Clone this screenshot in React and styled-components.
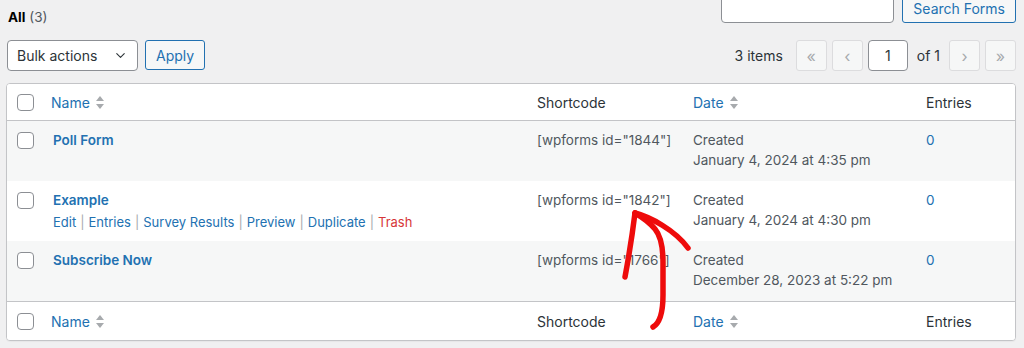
import React from 'react';
import styled, { createGlobalStyle } from 'styled-components';
import { ChevronDown } from 'lucide-react';

const GlobalStyle = createGlobalStyle`
	* {
		box-sizing: border-box;
	}
	body {
		margin: 0;
		background: #f0f0f1;
		font-family: Inter, 'Liberation Sans', Arial, sans-serif;
		font-size: 13.5px;
		color: #50575e;
		overflow: hidden;
	}
`;

const forms = [
	{ id: 1844, name: 'Poll Form', date: 'January 4, 2024 at 4:35 pm', striped: true },
	{ id: 1842, name: 'Example', date: 'January 4, 2024 at 4:30 pm', actions: true },
	{ id: 1766, name: 'Subscribe Now', date: 'December 28, 2023 at 5:22 pm', striped: true },
];

const actions = ['Edit', 'Entries', 'Survey Results', 'Preview', 'Duplicate'];

const SortIcon = () => (
	<SortSvg width='8' height='13' viewBox='0 0 8 13'>
		<path d='M4 0 L8 5 L0 5 Z' />
		<path d='M0 8 L8 8 L4 13 Z' />
	</SortSvg>
);

const ColumnHeads = ({ footer }) => (
	<HeadRow footer={footer}>
		<CheckCell>
			<Checkbox />
		</CheckCell>
		<HeadCell>
			<SortLink>
				Name <SortIcon />
			</SortLink>
		</HeadCell>
		<HeadCell>Shortcode</HeadCell>
		<HeadCell>
			<SortLink>
				Date <SortIcon />
			</SortLink>
		</HeadCell>
		<HeadCell>Entries</HeadCell>
	</HeadRow>
);

const App = () => {
	return (
		<Page>
			<GlobalStyle />
			<TopBar>
				<Subsubsub>
					<strong>All</strong> (3)
				</Subsubsub>
				<SearchBox>
					<SearchInput type='text' />
					<Button>Search Forms</Button>
				</SearchBox>
			</TopBar>

			<Tablenav>
				<BulkGroup>
					<BulkSelect>
						Bulk actions
						<ChevronDown size={15} strokeWidth={1.75} />
					</BulkSelect>
					<Button>Apply</Button>
				</BulkGroup>
				<Pagination>
					<ItemsCount>3 items</ItemsCount>
					<PageButton>«</PageButton>
					<PageButton>‹</PageButton>
					<PageInput>1</PageInput>
					<PageOf>of 1</PageOf>
					<PageButton>›</PageButton>
					<PageButton>»</PageButton>
				</Pagination>
			</Tablenav>

			<Table>
				<ColumnHeads />
				{forms.map((form) => (
					<Row key={form.id} striped={form.striped}>
						<CheckCell>
							<Checkbox />
						</CheckCell>
						<Cell>
							<RowTitle>{form.name}</RowTitle>
							{form.actions && (
								<RowActions>
									{actions.map((a) => (
										<React.Fragment key={a}>
											<ActionLink>{a}</ActionLink>
											<Sep>|</Sep>
										</React.Fragment>
									))}
									<ActionLink danger>Trash</ActionLink>
								</RowActions>
							)}
						</Cell>
						<Cell>[wpforms id="{form.id}"]</Cell>
						<Cell>
							Created
							<br />
							{form.date}
						</Cell>
						<Cell>
							<EntryLink>0</EntryLink>
						</Cell>
					</Row>
				))}
				<ColumnHeads footer />
			</Table>

			<Arrow width='110' height='140' viewBox='0 0 110 140'>
				<path d='M53 132 C60 128 63 118 63 100 L63 67 C63 50 60 40 55 34 C50 28 42 22 35 18' />
				<path d='M35 18 Q31 50 25 82' />
				<path d='M35 18 C50 22 75 35 88 53' />
			</Arrow>
		</Page>
	);
};

export default App;

const Page = styled.div`
	position: relative;
	display: flow-root;
	height: 348px;
	padding: 0 8px 0 6px;
`;

const TopBar = styled.div`
	display: flex;
	justify-content: space-between;
	align-items: flex-start;
	height: 30px;
	margin-top: -7px;
`;

const Subsubsub = styled.div`
	padding: 14px 0 0 2px;
	line-height: 20px;
	color: #50575e;
	strong {
		color: #000;
		font-weight: 700;
	}
`;

const SearchBox = styled.div`
	display: flex;
	gap: 8px;
`;

const SearchInput = styled.input`
	width: 173px;
	height: 30px;
	margin: 0;
	border: 1px solid #8c8f94;
	border-radius: 4px;
	background: #fff;
`;

const Button = styled.button`
	height: 30px;
	padding: 0 10px;
	border: 1px solid #2271b1;
	border-radius: 3px;
	background: #f6f7f7;
	color: #2271b1;
	font-family: inherit;
	font-size: 14px;
`;

const Tablenav = styled.div`
	display: flex;
	justify-content: space-between;
	align-items: center;
	height: 31px;
	margin-top: 17px;
`;

const BulkGroup = styled.div`
	display: flex;
	gap: 7px;
	padding-left: 1px;
`;

const BulkSelect = styled.div`
	display: flex;
	align-items: center;
	justify-content: space-between;
	width: 131px;
	height: 31px;
	padding: 0 9px 0 9px;
	border: 1px solid #8c8f94;
	border-radius: 4px;
	background: #fff;
	color: #2c3338;
	font-size: 14px;
	svg {
		color: #2c3338;
	}
`;

const Pagination = styled.div`
	display: flex;
	align-items: center;
	gap: 5px;
`;

const ItemsCount = styled.span`
	margin-right: 8px;
	font-size: 14px;
	color: #2c3338;
`;

const PageButton = styled.span`
	display: flex;
	align-items: center;
	justify-content: center;
	width: 31px;
	height: 31px;
	border: 1px solid #dcdcde;
	border-radius: 3px;
	background: #f6f7f7;
	color: #a7aaad;
	font-size: 16px;
`;

const PageInput = styled.span`
	display: flex;
	align-items: center;
	justify-content: center;
	width: 40px;
	height: 31px;
	border: 1px solid #8c8f94;
	border-radius: 4px;
	background: #fff;
	color: #2c3338;
	font-size: 14px;
`;

const PageOf = styled.span`
	margin: 0 4px;
	font-size: 14px;
	color: #2c3338;
`;

const Table = styled.div`
	margin-top: 12px;
	background: #fff;
	border: 1px solid #c3c4c7;
	border-radius: 4px;
	overflow: hidden;
	box-shadow: 0 1px 1px rgba(0, 0, 0, 0.04);
`;

const HeadRow = styled.div`
	display: grid;
	grid-template-columns: 36px 484px 156px 233px 1fr;
	align-items: center;
	height: ${(p) => (p.footer ? '39px' : '37px')};
	border-top: ${(p) => (p.footer ? '1px solid #c3c4c7' : 'none')};
	border-bottom: ${(p) => (p.footer ? 'none' : '1px solid #c3c4c7')};
	background: #fff;
`;

const Row = styled.div`
	display: grid;
	grid-template-columns: 36px 484px 156px 233px 1fr;
	align-items: start;
	height: 60px;
	background: ${(p) => (p.striped ? '#f6f7f7' : '#fff')};
	line-height: 20px;
`;

const CheckCell = styled.div`
	display: flex;
	padding-left: 10px;
	${Row} & {
		padding-top: 11px;
	}
`;

const Checkbox = styled.span`
	width: 17px;
	height: 17px;
	border: 1px solid #8c8f94;
	border-radius: 4px;
	background: #fff;
`;

const HeadCell = styled.div`
	padding: 0 10px;
	font-size: 14px;
	color: #2c3338;
	&:nth-child(2) {
		padding-left: 8px;
	}
`;

const SortLink = styled.span`
	display: inline-flex;
	align-items: center;
	gap: 6px;
	color: #2271b1;
`;

const SortSvg = styled.svg`
	fill: #a7aaad;
`;

const Cell = styled.div`
	padding: 9px 10px 0;
	font-size: 13.5px;
	color: #50575e;
`;

const RowTitle = styled.div`
	font-weight: 600;
	font-size: 13.5px;
	color: #2271b1;
`;

const RowActions = styled.div`
	margin-top: 2px;
	font-size: 13px;
	color: #a7aaad;
`;

const ActionLink = styled.span`
	color: ${(p) => (p.danger ? '#d63638' : '#2271b1')};
`;

const Sep = styled.span`
	margin: 0 4px;
	color: #a7aaad;
`;

const EntryLink = styled.span`
	color: #2271b1;
`;

const Arrow = styled.svg`
	position: absolute;
	left: 600px;
	top: 195px;
	fill: none;
	stroke: #ee0b0b;
	stroke-width: 5.5;
	stroke-linecap: round;
	stroke-linejoin: round;
`;
